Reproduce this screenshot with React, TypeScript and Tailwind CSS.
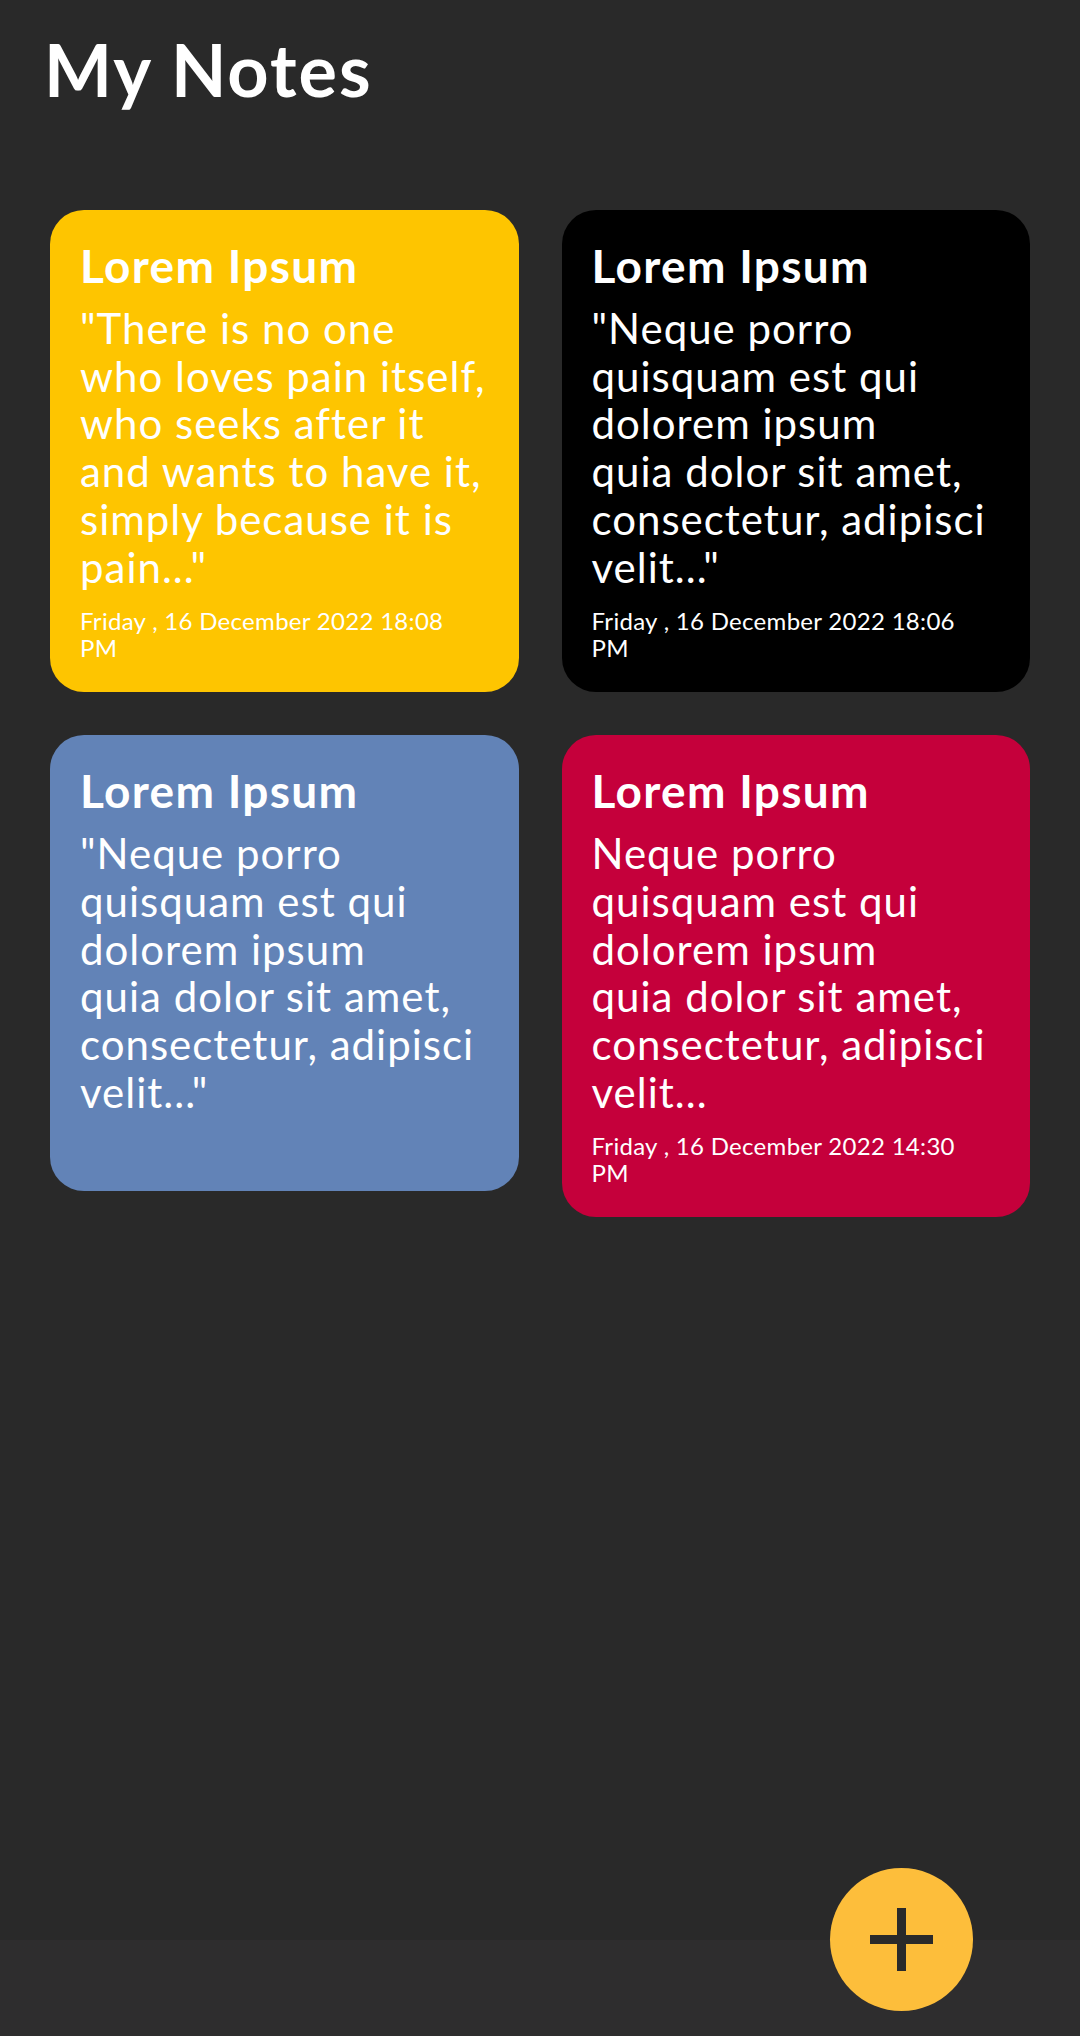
import React from 'react';

interface Note {
  id: number;
  title: string;
  body: string;
  date?: string;
  bg: string;
}

const notes: Note[] = [
  {
    id: 1,
    title: 'Lorem Ipsum',
    body: '"There is no one\nwho loves pain itself,\nwho seeks after it\nand wants to have it,\nsimply because it is\npain..."',
    date: 'Friday , 16 December 2022 18:08\nPM',
    bg: 'bg-[#fec500]',
  },
  {
    id: 2,
    title: 'Lorem Ipsum',
    body: '"Neque porro\nquisquam est qui\ndolorem ipsum\nquia dolor sit amet,\nconsectetur, adipisci\nvelit..."',
    date: 'Friday , 16 December 2022 18:06\nPM',
    bg: 'bg-black',
  },
  {
    id: 3,
    title: 'Lorem Ipsum',
    body: '"Neque porro\nquisquam est qui\ndolorem ipsum\nquia dolor sit amet,\nconsectetur, adipisci\nvelit..."',
    bg: 'bg-[#6283b7]',
  },
  {
    id: 4,
    title: 'Lorem Ipsum',
    body: 'Neque porro\nquisquam est qui\ndolorem ipsum\nquia dolor sit amet,\nconsectetur, adipisci\nvelit...',
    date: 'Friday , 16 December 2022 14:30\nPM',
    bg: 'bg-[#c5003b]',
  },
];

const NoteCard: React.FC<{ note: Note }> = ({ note }) => (
  <div className={`${note.bg} rounded-[34px] px-[30px] pt-[28px] pb-[31px] text-white`}>
    <h2 className="text-[46px] leading-[55px] font-bold tracking-[1.3px]">{note.title}</h2>
    <p className="mt-[12px] text-[42px] leading-[47.7px] tracking-[1px] whitespace-pre-line">{note.body}</p>
    <p className="mt-[16px] min-h-[28px] text-[24px] leading-[27px] tracking-[0.3px] whitespace-pre-line">
      {note.date}
    </p>
  </div>
);

export default function App() {
  return (
    <div className="min-h-[2036px] flex flex-col bg-[#292929] font-['Lato',sans-serif]">
      <main className="flex-1">
        {/* Header */}
        <h1 className="pl-[44px] pt-[26px] text-[72px] leading-[86px] font-bold tracking-[2px] text-white">My Notes</h1>

        {/* Notes */}
        <div className="grid grid-cols-2 items-start gap-[43px] px-[50px] pt-[98px]">
          {notes.map((note) => (
            <NoteCard key={note.id} note={note} />
          ))}
        </div>
      </main>

      {/* Bottom bar with add button */}
      <div className="relative h-[96px] bg-[#2e2d2e]">
        <button className="absolute -top-[72px] right-[107px] w-[143px] h-[143px] rounded-full bg-[#fdbe3b] flex items-center justify-center">
          <svg width="63" height="63" viewBox="0 0 63 63">
            <rect x="27" y="0" width="9" height="63" fill="#2a2a2a" />
            <rect x="0" y="27" width="63" height="9" fill="#2a2a2a" />
          </svg>
        </button>
      </div>
    </div>
  );
}
